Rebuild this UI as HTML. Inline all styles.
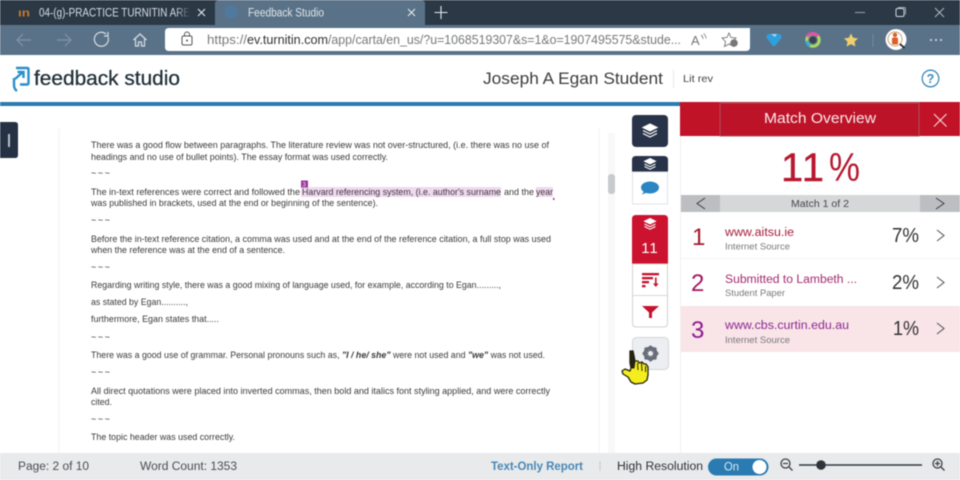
<!DOCTYPE html>
<html lang="en"><head><meta charset="utf-8"><title>Feedback Studio</title>
<style>
html,body{margin:0;padding:0;width:960px;height:480px;overflow:hidden;background:#fff}
svg{display:block;filter:blur(.4px)}
text{font-family:"Liberation Sans",sans-serif}
.d{font-size:9px;fill:#3a3a3a}
.n{font-size:11.5px}
.s{font-size:9.5px;fill:#77797c}
.p{font-size:20px;fill:#333}
.b{font-size:11.5px;fill:#4a4d50}
</style></head><body>
<svg width="960" height="480" viewBox="0 0 960 480" xmlns="http://www.w3.org/2000/svg">
<defs><linearGradient id="fade" x1="0" x2="1"><stop offset="0" stop-color="#2b3947" stop-opacity="0"/><stop offset="1" stop-color="#2b3947"/></linearGradient></defs>
<!-- tab strip -->
<rect width="960" height="25" fill="#2b3947"/>
<rect y="25" width="960" height="30" fill="#5a7288"/>
<path d="M215 25V4q0-4 4-4h202q4 0 4 4v21z" fill="#5a7288"/>
<text x="18" y="16.500" font-size="11" font-weight="bold" fill="#c9772c" textLength="12" lengthAdjust="spacingAndGlyphs">ın</text>
<text x="39" y="16.500" font-size="11.500" fill="#d8dde2" textLength="151" lengthAdjust="spacingAndGlyphs">04-(g)-PRACTICE TURNITIN ARE</text>
<rect x="176" y="4" width="14" height="16" fill="url(#fade)"/>
<path d="M198 9l7 7m0-7l-7 7" stroke="#e4e8ec" stroke-width="1.100"/>
<rect x="225" y="6" width="12" height="12" rx="4" fill="#4f7a9f"/>
<text x="248" y="16.500" font-size="11.500" fill="#dfe5ea" textLength="76" lengthAdjust="spacingAndGlyphs">Feedback Studio</text>
<path d="M408 9l7 7m0-7l-7 7" stroke="#e4e8ec" stroke-width="1.100"/>
<path d="M441 6v13M434.500 12.500h13" stroke="#e4e8ec" stroke-width="1.100"/>
<path d="M855 12.500h10" stroke="#8e9aa5" stroke-width="1.100"/>
<rect x="896" y="8.500" width="8" height="8" rx="1.500" fill="none" stroke="#cfd5da"/><path d="M898 7.500h6.500q1 0 1 1v6" fill="none" stroke="#98a3ad"/>
<path d="M935 8l9 9m0-9l-9 9" stroke="#aeb7bf" stroke-width="1"/>
<!-- toolbar -->
<g fill="none" stroke="#7f94a6" stroke-width="1.200"><path d="M17 40h14M23 34l-6 6 6 6"/><path d="M57 40h14M65 34l6 6-6 6"/></g>
<g fill="none" stroke="#d5dde4" stroke-width="1.200"><path d="M108 37a7 7 0 1 1-2-3M108 32v4h-4"/><path d="M133.500 40l6.500-6 6.500 6M135.500 39v7h3v-4h3v4h3v-7"/></g>
<path d="M165 32q0-4 4-4h581v19q0 4-4 4H169q-4 0-4-4z" fill="#fff"/>
<rect x="182" y="36" width="10" height="9" rx="1.500" fill="none" stroke="#555" stroke-width="1"/><path d="M184.500 36v-1.500a2.500 2.500 0 0 1 5 0V36" fill="none" stroke="#555"/><circle cx="187" cy="40.500" r="1" fill="#555"/>
<text x="207" y="44" font-size="12.500" fill="#77797c" textLength="40" lengthAdjust="spacingAndGlyphs">https://</text>
<text x="247" y="44" font-size="12.500" fill="#333" textLength="81" lengthAdjust="spacingAndGlyphs">ev.turnitin.com</text>
<text x="328" y="44" font-size="12.500" fill="#77797c" textLength="353" lengthAdjust="spacingAndGlyphs">/app/carta/en_us/?u=1068519307&amp;s=1&amp;o=1907495575&amp;stude...</text>
<text x="691" y="45" font-size="13" fill="#777">A</text><path d="M701 35q2 1.500 2 4M703.500 33.500q2.500 2 2.500 5" fill="none" stroke="#777" stroke-width=".8"/>
<path d="M729 33l2 4.500 5 .5-3.500 3.500 1 5-4.500-2.500-4.500 2.500 1-5L722 38l5-.5z" fill="none" stroke="#666" stroke-width=".8"/><circle cx="734" cy="43" r="3.800" fill="#777"/>
<path d="M768 34h12l2 3-7 9h-2l-7-9z" fill="#2ea0de"/><path d="M771 34h6l-2 3z" fill="#9fdcf5"/>
<circle cx="813" cy="40" r="6.200" fill="none" stroke="#a8d95c" stroke-width="3"/><path d="M807 36.500a7 7 0 0 1 11-.5" fill="none" stroke="#e84fa8" stroke-width="3"/><path d="M806.800 41a6.500 6.500 0 0 0 3.200 5" fill="none" stroke="#3da9d9" stroke-width="3"/><circle cx="813" cy="40" r="3.500" fill="#3a4252"/>
<path d="M851 33.500l2.100 4.300 4.900.6-3.500 3.300.9 4.800-4.400-2.400-4.400 2.400.9-4.800-3.500-3.300 4.900-.6z" fill="#f0cf6c"/>
<path d="M873 34v13" stroke="#74899c"/>
<circle cx="896" cy="39.500" r="10.500" fill="#fff"/><circle cx="895" cy="39" r="7" fill="#fff" stroke="#c9a078"/><circle cx="895" cy="35" r="2.200" fill="#d9602a"/><rect x="892" y="37.500" width="6" height="7" rx="1.500" fill="#d9602a"/><path d="M900 44l4.500 4" stroke="#222" stroke-width="1.800"/>
<g fill="#d8dfe5"><circle cx="931" cy="40" r="1"/><circle cx="936" cy="40" r="1"/><circle cx="941" cy="40" r="1"/></g>
<!-- header -->
<rect y="55" width="960" height="47" fill="#fff"/>
<rect y="102" width="680" height="4" fill="#2a7bb1"/>
<g fill="none" stroke="#2a8fc9" stroke-width="2.400"><path d="M16 68h11q1.500 0 1.500 1.500v13.500q0 1.500-1.500 1.500H20"/><path d="M14 78v7q0 4 3 6"/><path d="M15 79l8-7M17.500 72h6v6"/></g>
<text x="34" y="85" font-size="20.500" fill="#1f3038" stroke="#1f3038" stroke-width=".3" textLength="146" lengthAdjust="spacingAndGlyphs">feedback studio</text>
<text x="483" y="84" font-size="16.500" fill="#3a3d40" textLength="180" lengthAdjust="spacingAndGlyphs">Joseph A Egan Student</text>
<path d="M673.500 70v18" stroke="#e6e8ea"/>
<text x="683" y="82" font-size="10.500" fill="#444" textLength="30" lengthAdjust="spacingAndGlyphs">Lit rev</text>
<circle cx="930.500" cy="78.500" r="8.300" fill="none" stroke="#3f8abb" stroke-width="1.300"/>
<text x="930.500" y="83" font-size="12.500" font-weight="bold" fill="#3f8abb" text-anchor="middle">?</text>
<!-- left tab -->
<path d="M0 122h15q3 0 3 3v30q0 3-3 3H0z" fill="#253243"/><rect x="8" y="134" width="2" height="13" fill="#b9bfc6"/>
<!-- doc frame -->
<path d="M59 128v325" stroke="#f2f2f3"/><path d="M599 128v325" stroke="#f2f2f3"/>
<rect x="608" y="133" width="7" height="320" fill="#f8f8f9"/>
<rect x="608" y="174" width="7" height="20" rx="3" fill="#c9cacc"/>
<rect x="301" y="187" width="200" height="10" fill="#f0d8ee"/>
<rect x="536" y="187" width="17" height="10" fill="#f0d8ee"/>
<rect x="301" y="180.500" width="7" height="7" fill="#9c35a0"/>
<text x="302.500" y="186.500" font-size="6" fill="#f1def1">3</text>
<rect x="553" y="198" width="1.500" height="2" fill="#9c35a0"/>
<!-- doc text -->
<g class="dt">
<text class="d" x="91" y="148" textLength="458" lengthAdjust="spacingAndGlyphs">There was a good flow between paragraphs.  The literature review was not over-structured, (i.e. there was no use of</text>
<text class="d" x="91" y="160" textLength="297" lengthAdjust="spacingAndGlyphs">headings and no use of bullet points).  The essay format was used correctly.</text>
<text class="d" x="91" y="176" textLength="19" lengthAdjust="spacing">~ ~ ~</text>
<text class="d" x="91" y="195" textLength="209" lengthAdjust="spacingAndGlyphs">The in-text references were correct and followed the</text>
<text class="d" x="302" y="195" textLength="199" lengthAdjust="spacingAndGlyphs">Harvard referencing system, (i.e. author's surname</text>
<text class="d" x="504" y="195" textLength="30" lengthAdjust="spacingAndGlyphs">and the</text>
<text class="d" x="536" y="195" textLength="17" lengthAdjust="spacingAndGlyphs">year</text>
<text class="d" x="91" y="206" textLength="287" lengthAdjust="spacingAndGlyphs">was published in brackets, used at the end or beginning of the sentence).</text>
<text class="d" x="91" y="223" textLength="19" lengthAdjust="spacing">~ ~ ~</text>
<text class="d" x="91" y="242" textLength="460" lengthAdjust="spacingAndGlyphs">Before the in-text reference citation, a comma was used and at the end of the reference citation, a full stop was used</text>
<text class="d" x="91" y="253" textLength="194" lengthAdjust="spacingAndGlyphs">when the reference was at the end of a sentence.</text>
<text class="d" x="91" y="270" textLength="19" lengthAdjust="spacing">~ ~ ~</text>
<text class="d" x="91" y="288" textLength="410" lengthAdjust="spacingAndGlyphs">Regarding writing style, there was a good mixing of language used, for example, according to Egan.........,</text>
<text class="d" x="91" y="305" textLength="97" lengthAdjust="spacingAndGlyphs">as stated by Egan..........,</text>
<text class="d" x="91" y="322" textLength="128" lengthAdjust="spacingAndGlyphs">furthermore, Egan states that.....</text>
<text class="d" x="91" y="340" textLength="19" lengthAdjust="spacing">~ ~ ~</text>
<text class="d" x="91" y="358" textLength="454" lengthAdjust="spacingAndGlyphs">There was a good use of grammar.  Personal pronouns such as, <tspan font-weight="bold" font-style="italic">"I / he/ she"</tspan> were not used and <tspan font-weight="bold" font-style="italic">"we"</tspan> was not used.</text>
<text class="d" x="91" y="375" textLength="19" lengthAdjust="spacing">~ ~ ~</text>
<text class="d" x="91" y="394" textLength="459" lengthAdjust="spacingAndGlyphs">All direct quotations were placed into inverted commas, then bold and italics font styling applied, and were correctly</text>
<text class="d" x="91" y="405" textLength="21" lengthAdjust="spacingAndGlyphs">cited.</text>
<text class="d" x="91" y="422" textLength="19" lengthAdjust="spacing">~ ~ ~</text>
<text class="d" x="91" y="440" textLength="144" lengthAdjust="spacingAndGlyphs">The topic header was used correctly.</text>
</g>
<!-- tool buttons -->
<rect x="632" y="115" width="36" height="32" rx="4" fill="#28334a"/>
<g fill="none" stroke="#fff" stroke-width="1.200"><path d="M650 124l7 3.500-7 3.500-7-3.500z" fill="#fff"/><path d="M643 130.500l7 3.500 7-3.500M643 133.500l7 3.500 7-3.500"/></g>
<path d="M632 172v-12q0-4 4-4h28q4 0 4 4v12z" fill="#28334a"/>
<rect x="632.500" y="172" width="35" height="32" fill="#fff" stroke="#dfe2e6"/>
<g fill="none" stroke="#fff" stroke-width="1"><path d="M650 158.500l5.500 2.700-5.500 2.700-5.500-2.700z" fill="#fff"/><path d="M644.500 164l5.500 2.700 5.500-2.700M644.500 166.500l5.500 2.700 5.500-2.700"/></g>
<ellipse cx="650" cy="187.500" rx="9" ry="6" fill="#2a86c3"/><path d="M644 191l-2 3.500 5-2z" fill="#2a86c3"/>
<path d="M632 264v-45q0-4 4-4h28q4 0 4 4v45z" fill="#cb1330"/>
<g fill="none" stroke="#fff" stroke-width="1"><path d="M650 218.500l5.500 2.700-5.500 2.700-5.500-2.700z" fill="#fff"/><path d="M644.500 224l5.500 2.700 5.500-2.700M644.500 226.500l5.500 2.700 5.500-2.700"/></g>
<text x="650" y="253" font-size="15" fill="#fff" text-anchor="middle" letter-spacing="1">11</text>
<path d="M632.500 264v59q0 4 4 4h27q4 0 4-4v-59z" fill="#fff" stroke="#d5d0d3"/>
<path d="M632.500 295.500h35" stroke="#dcd6d9"/>
<g fill="#c5122e"><rect x="642" y="273" width="17" height="2.300"/><rect x="642" y="277" width="11" height="2.300"/><rect x="642" y="281" width="7" height="2.300"/><rect x="642" y="285" width="3.500" height="2.300"/><path d="M655 277.500h1.600v6h2l-2.800 3.500-2.800-3.500h2z"/></g>
<path d="M642 306h17l-7 6.500v5.500h-3v-5.500z" fill="#c5122e"/>
<rect x="632.500" y="337.500" width="36" height="32" rx="4" fill="#eceef1" stroke="#d3d5d8"/>
<circle cx="650.500" cy="353.500" r="5.500" fill="none" stroke="#666d78" stroke-width="3.200"/>
<path d="M650.500 345.500v16M642.500 353.500h16M644.800 347.800l11.400 11.400M656.200 347.800l-11.400 11.400" stroke="#666d78" stroke-width="2.200"/>
<circle cx="650.500" cy="353.500" r="2.500" fill="#eceef1"/>
<!-- hand -->
<path d="M630 351l3 0 2 10 3 0 1 2 3-1 2 2 2 0 2 3 0 8-1 5-4 3-8 1-4-2-3-5-5-3-1-3 3-2 5 2 1-3-1-5 0-3z" fill="#f5ee1e" stroke="#23230f" stroke-width="1.300" stroke-linejoin="round"/>
<path d="M630 351l3 0 2 10-1 7h-3zM637.500 363l.5 7M641.500 363l.5 8M645.500 366v6" stroke="#23230f" fill="#23230f" stroke-width="1"/>
<!-- right panel -->
<rect x="680" y="102" width="280" height="351" fill="#fff"/>
<path d="M680.500 106v347" stroke="#f0f0f1"/>
<rect x="680" y="102" width="280" height="34" fill="#c01327"/>
<rect x="720" y="103" width="199" height="33" fill="#bc1328" stroke="#a9505e" stroke-width="1"/>
<text x="820" y="123" font-size="14.500" fill="#fbe9ea" text-anchor="middle" textLength="112" lengthAdjust="spacingAndGlyphs">Match Overview</text>
<path d="M934 114l12.500 12.500m0-12.500L934 126.500" stroke="#f6d9dc" stroke-width="1.100"/>
<text x="781" y="181" font-size="40" fill="#b8172f" stroke="#b8172f" stroke-width=".4" textLength="43" lengthAdjust="spacing">11</text>
<text x="829" y="181" font-size="40" fill="#b8172f" textLength="31" lengthAdjust="spacingAndGlyphs">%</text>
<rect x="681" y="195" width="279" height="17" fill="#d5d7d9"/>
<rect x="681" y="195" width="39" height="17" fill="#bcbec2"/><rect x="920" y="195" width="40" height="17" fill="#bcbec2"/>
<path d="M705 198l-8 5.500 8 5.500M936 198l8 5.500-8 5.500" fill="none" stroke="#3b3e44" stroke-width="1"/>
<text x="820" y="207" font-size="10" fill="#45484c" text-anchor="middle" textLength="58" lengthAdjust="spacingAndGlyphs">Match 1 of 2</text>
<path d="M681 258.500h279" stroke="#f4f4f5"/>
<rect x="681" y="306" width="279" height="46" fill="#f9e4e8"/>
<text x="692" y="245" font-size="24" fill="#a8172f">1</text>
<text x="691" y="291" font-size="24" fill="#a5175e">2</text>
<text x="691" y="338" font-size="24" fill="#8c1b90">3</text>
<text class="n" x="725" y="236" fill="#a51e3c" textLength="69" lengthAdjust="spacingAndGlyphs">www.aitsu.ie</text>
<text class="s" x="725" y="249.500" textLength="65" lengthAdjust="spacingAndGlyphs">Internet Source</text>
<text class="n" x="725" y="283" fill="#a32c6e" textLength="132" lengthAdjust="spacingAndGlyphs">Submitted to Lambeth ...</text>
<text class="s" x="725" y="296" textLength="60" lengthAdjust="spacingAndGlyphs">Student Paper</text>
<text class="n" x="725" y="329" fill="#8c2a90" textLength="124" lengthAdjust="spacingAndGlyphs">www.cbs.curtin.edu.au</text>
<text class="s" x="725" y="343" textLength="65" lengthAdjust="spacingAndGlyphs">Internet Source</text>
<text class="p" x="892" y="242" textLength="27" lengthAdjust="spacingAndGlyphs">7%</text>
<text class="p" x="892" y="289" textLength="27" lengthAdjust="spacingAndGlyphs">2%</text>
<text class="p" x="893" y="335" textLength="26" lengthAdjust="spacingAndGlyphs">1%</text>
<path d="M937 230l7 5.500-7 5.500M937 277l7 5.500-7 5.500M937 323l7 5.500-7 5.500" fill="none" stroke="#55585c" stroke-width="1.100"/>
<!-- bottom bar -->
<rect y="453" width="960" height="27" fill="#e8eaec"/>
<text class="b" x="18" y="470" textLength="71" lengthAdjust="spacingAndGlyphs">Page: 2 of 10</text>
<text class="b" x="140" y="470" textLength="97" lengthAdjust="spacingAndGlyphs">Word Count: 1353</text>
<text x="491" y="470" font-size="11.500" font-weight="bold" fill="#4a87b3" textLength="92" lengthAdjust="spacingAndGlyphs">Text-Only Report</text>
<path d="M600 461v10" stroke="#c8cbce"/>
<text x="617" y="470" font-size="11.500" fill="#2f3235" textLength="86" lengthAdjust="spacingAndGlyphs">High Resolution</text>
<rect x="708" y="458.500" width="60.500" height="17" rx="8.500" fill="#2a7bb1"/>
<text x="724" y="470.500" font-size="11.500" fill="#d8e8f2" textLength="15" lengthAdjust="spacingAndGlyphs">On</text>
<circle cx="759.500" cy="467" r="7" fill="#fff"/>
<g fill="none" stroke="#3d4146" stroke-width="1.300"><circle cx="785.500" cy="463.500" r="4.500"/><path d="M789 467l3.500 3.500M783 463.500h5"/><circle cx="937.500" cy="463.500" r="4.500"/><path d="M941 467l3.500 3.500M935 463.500h5M937.500 461v5"/></g>
<path d="M799 465h123" stroke="#333a40" stroke-width="1.500"/>
<circle cx="821" cy="465" r="4.800" fill="#2d343b"/>
</svg>
</body></html>
